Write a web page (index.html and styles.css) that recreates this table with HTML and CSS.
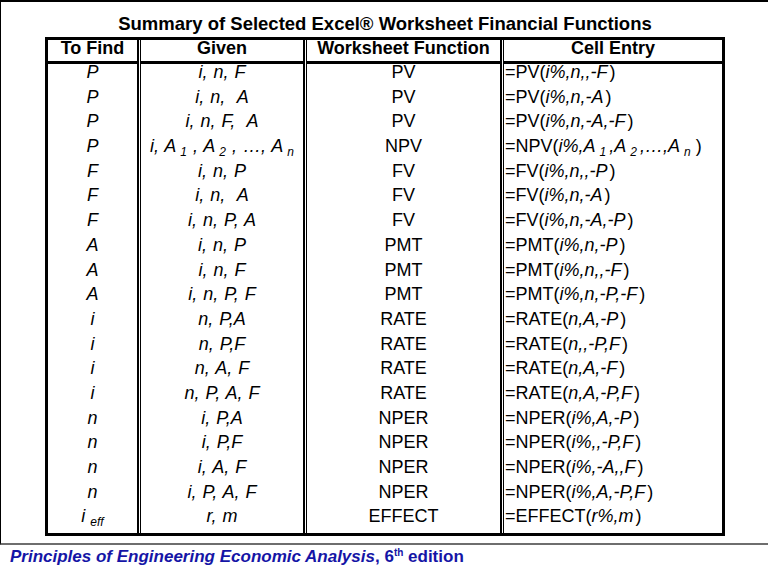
FILE: index.html
```html
<!DOCTYPE html>
<html lang="en">
<head>
<meta charset="utf-8">
<title>Summary of Selected Excel Worksheet Financial Functions</title>
<link rel="stylesheet" href="styles.css">
</head>
<body>
<div class="frame">
  <h1 class="title">Summary of Selected Excel® Worksheet Financial Functions</h1>
  <div class="sheet">
    <div class="hd c1">To Find</div>
    <div class="hd c2">Given</div>
    <div class="hd c3">Worksheet Function</div>
    <div class="hd c4">Cell Entry</div>

    <div class="c1 it">P</div><div class="c2 it">i, n, F</div><div class="c3">PV</div><div class="c4">=PV(<i>i%,n,,-F</i>)</div>
    <div class="c1 it">P</div><div class="c2 it">i, n,&nbsp; A</div><div class="c3">PV</div><div class="c4">=PV(<i>i%,n,-A</i>)</div>
    <div class="c1 it">P</div><div class="c2 it">i, n, F,&nbsp; A</div><div class="c3">PV</div><div class="c4">=PV(<i>i%,n,-A,-F</i>)</div>
    <div class="c1 it">P</div><div class="c2 it">i, A<sub>1</sub> , A<sub>2</sub> , …, A<sub>n</sub></div><div class="c3">NPV</div><div class="c4">=NPV(<i>i%,A<sub>1</sub>,A<sub>2</sub>,…,A<sub>n</sub></i>)</div>
    <div class="c1 it">F</div><div class="c2 it">i, n, P</div><div class="c3">FV</div><div class="c4">=FV(<i>i%,n,,-P</i>)</div>
    <div class="c1 it">F</div><div class="c2 it">i, n,&nbsp; A</div><div class="c3">FV</div><div class="c4">=FV(<i>i%,n,-A</i>)</div>
    <div class="c1 it">F</div><div class="c2 it">i, n, P, A</div><div class="c3">FV</div><div class="c4">=FV(<i>i%,n,-A,-P</i>)</div>
    <div class="c1 it">A</div><div class="c2 it">i, n, P</div><div class="c3">PMT</div><div class="c4">=PMT(<i>i%,n,-P</i>)</div>
    <div class="c1 it">A</div><div class="c2 it">i, n, F</div><div class="c3">PMT</div><div class="c4">=PMT(<i>i%,n,,-F</i>)</div>
    <div class="c1 it">A</div><div class="c2 it">i, n, P, F</div><div class="c3">PMT</div><div class="c4">=PMT(<i>i%,n,-P,-F</i>)</div>
    <div class="c1 it">i</div><div class="c2 it">n, P,A</div><div class="c3">RATE</div><div class="c4">=RATE(<i>n,A,-P</i>)</div>
    <div class="c1 it">i</div><div class="c2 it">n, P,F</div><div class="c3">RATE</div><div class="c4">=RATE(<i>n,,-P,F</i>)</div>
    <div class="c1 it">i</div><div class="c2 it">n, A, F</div><div class="c3">RATE</div><div class="c4">=RATE(<i>n,A,-F</i>)</div>
    <div class="c1 it">i</div><div class="c2 it">n, P, A, F</div><div class="c3">RATE</div><div class="c4">=RATE(<i>n,A,-P,F</i>)</div>
    <div class="c1 it">n</div><div class="c2 it">i, P,A</div><div class="c3">NPER</div><div class="c4">=NPER(<i>i%,A,-P</i>)</div>
    <div class="c1 it">n</div><div class="c2 it">i, P,F</div><div class="c3">NPER</div><div class="c4">=NPER(<i>i%,,-P,F</i>)</div>
    <div class="c1 it">n</div><div class="c2 it">i, A, F</div><div class="c3">NPER</div><div class="c4">=NPER(<i>i%,-A,,F</i>)</div>
    <div class="c1 it">n</div><div class="c2 it">i, P, A, F</div><div class="c3">NPER</div><div class="c4">=NPER(<i>i%,A,-P,F</i>)</div>
    <div class="c1 it">i<sub>eff</sub></div><div class="c2 it">r, m</div><div class="c3">EFFECT</div><div class="c4">=EFFECT(<i>r%,m</i>)</div>
  </div>
</div>
<p class="footer"><i>Principles of Engineering Economic Analysis</i>, 6<sup>th</sup> edition</p>
</body>
</html>
```
FILE: styles.css
```css
html, body {
  margin: 0;
  padding: 0;
  background: #fff;
}
body {
  font-family: "Liberation Sans", Arial, Helvetica, sans-serif;
  color: #000;
  width: 768px;
  height: 576px;
  overflow: hidden;
}
.frame {
  box-sizing: border-box;
  width: 780px;
  height: 545px;
  border-top: 2px solid #000;
  border-left: 1px solid #000;
  border-bottom: 2px solid #6e6e6e;
}
.title {
  margin: 11px 0 0 44px;
  width: 680px;
  font-size: 18.5px;
  line-height: 21px;
  font-weight: bold;
  text-align: center;
}
.sheet {
  margin: 3px 0 0 44px;
  width: 680px;
  box-sizing: border-box;
  border: 3px solid #000;
  display: grid;
  grid-template-columns: 91px 165px 196px 219px;
  grid-template-rows: 24px repeat(19, 24.7px);
  column-gap: 1px;
  font-size: 18px;
  line-height: 17px;
}
.sheet > div {
  box-sizing: border-box;
  white-space: nowrap;
}
.c1 {
  text-align: center;
  border-right: 2px solid #000;
}
.c2, .c3 {
  text-align: center;
  border-left: 1px solid #000;
  border-right: 2px solid #000;
}
.c2 {
  word-spacing: 1px;
}
.c4 {
  border-left: 1px solid #000;
  padding-left: 1px;
}
.c4 i {
  padding-right: 2px;
}
.hd {
  font-weight: bold;
  line-height: 16px;
  border-bottom: 3px solid #000;
  text-align: center;
  word-spacing: 0;
}
.sheet > .hd.c4 {
  padding-left: 0;
}
.it {
  font-style: italic;
}
sub {
  font-size: 12px;
  vertical-align: -4px;
  line-height: 0;
  margin-left: 4px;
}
.c4 sub {
  margin-right: 3px;
}
.c1 sub {
  margin-left: 5px;
}
.footer {
  margin: 2px 0 0 0;
  padding-left: 10px;
  font-size: 17px;
  line-height: 20px;
  font-weight: bold;
  color: #1515a6;
}
.footer sup {
  font-size: 10px;
  vertical-align: 6px;
  line-height: 0;
}
```
